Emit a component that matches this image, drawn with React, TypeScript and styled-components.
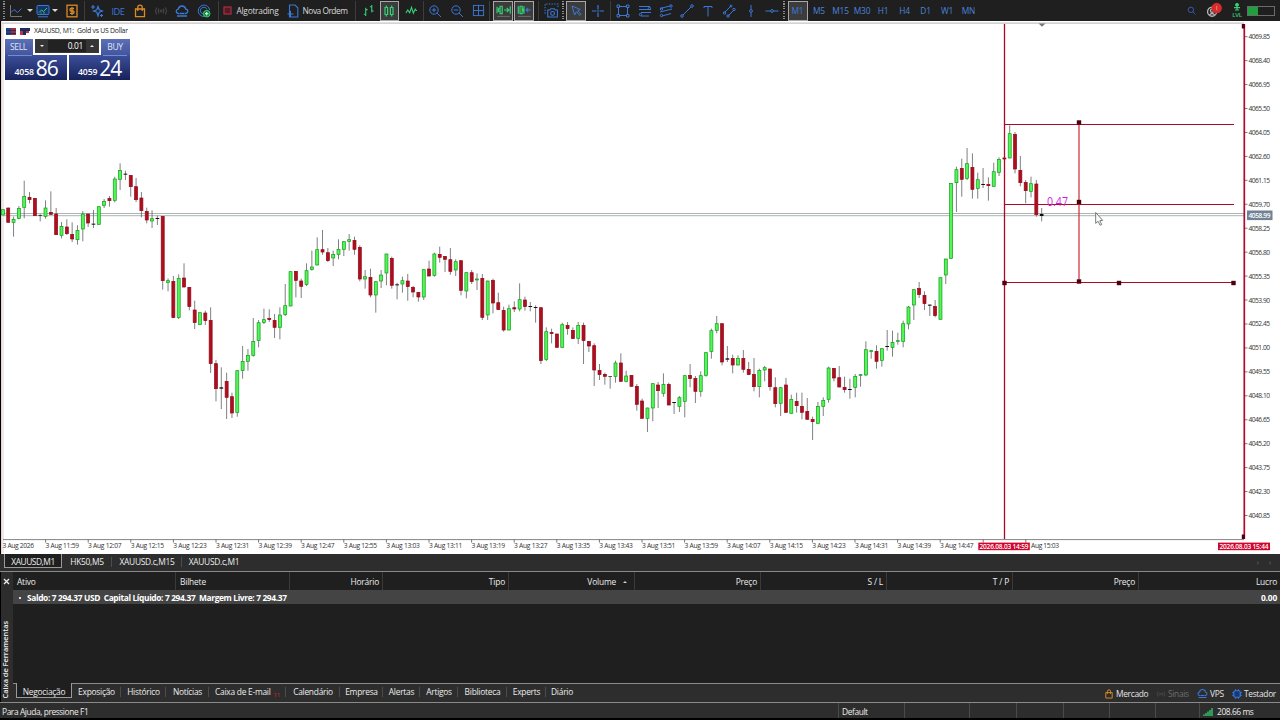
import { ReactNode } from 'react';
import styled, { createGlobalStyle, css } from 'styled-components';

const GlobalStyle = createGlobalStyle`
  * {
    box-sizing: border-box;
  }

  body {
    margin: 0;
    background: #000;
    overflow: hidden;
    font-family: 'Open Sans', 'Noto Sans', sans-serif;
  }
`;

const BLUE = '#3b78d8';
const GREEN = '#35cf74';
const ORANGE = '#dc8a28';

const Terminal = styled.div`
  display: flex;
  flex-direction: column;
  width: 1280px;
  height: 720px;
  padding-bottom: 2px;
  background: #000;
  color: #ececec;
  font-size: 8.4px;
  line-height: 1;
  white-space: nowrap;

  svg {
    flex: none;
  }
`;

/* ---------- toolbar ---------- */

const Toolbar = styled.div`
  display: flex;
  align-items: center;
  flex: 0 0 21px;
  background: #1f1f1f;
`;

const Slot = styled.div<{ $w: number; $color?: string }>`
  display: flex;
  align-items: center;
  justify-content: center;
  flex: 0 0 ${(p) => p.$w}px;
  min-width: 0;
  height: 21px;
  color: ${(p) => p.$color ?? '#d8d8d8'};
`;

const Pressed = styled.div<{ $w?: number }>`
  display: flex;
  align-items: center;
  justify-content: center;
  flex: none;
  width: ${(p) => p.$w ?? 20}px;
  height: 20px;
  background: #3c3c3c;
  border: 1px solid #a8a8a8;
`;

const Divider = styled.div`
  width: 1px;
  height: 20px;
  background: #3d3d3d;
`;

const Grip = styled.div`
  width: 2px;
  height: 20px;
  background: repeating-linear-gradient(#8a8a8a 0 1px, #1f1f1f 1px 2.5px);
`;

const Caret = styled.div`
  border: 3px solid transparent;
  border-top-color: #d8d8d8;
  border-bottom: 0;
`;

const ToolLabel = styled.span<{ $size?: number; $spacing?: number }>`
  padding-top: 2px;
  font-size: ${(p) => p.$size ?? 8.4}px;
  letter-spacing: ${(p) => p.$spacing ?? -0.1}px;
`;

const LevelMeter = styled.div`
  display: flex;
  flex-direction: column;
  align-items: center;
  color: ${GREEN};
  font-size: 6px;
  font-weight: 600;
  line-height: 8px;
  letter-spacing: -0.3px;
`;

const Spacer = styled.div`
  flex: 1;
`;

const Battery = styled.div`
  width: 28px;
  height: 10px;
  border: 1px solid #6b6b6b;
  background: linear-gradient(90deg, #1ea03c 10px, #1f1f1f 10px);
`;

/* ---------- chart ---------- */

const ChartWindow = styled.div`
  position: relative;
  flex: 0 0 533px;
  margin-left: 1px;
  background: #fff;
  border-left: 1px solid #e6d8da;
`;

const ChartCanvas = styled.svg`
  display: block;
  margin-left: -2px;
  font-family: 'Open Sans', 'Noto Sans', sans-serif;
`;

const ChartOverlay = styled.div`
  position: absolute;
  left: 3px;
  top: 5px;
  width: 125px;
`;

const ChartTitle = styled.div`
  display: flex;
  align-items: center;
  gap: 4px;
  height: 10px;
  margin: 0 0 3px 1px;
  color: #222;
  font-size: 6.9px;
  letter-spacing: -0.26px;
`;

const TradeTop = styled.div`
  display: flex;
  height: 16px;
`;

const TradeButton = styled.div<{ $w: number }>`
  display: flex;
  align-items: center;
  justify-content: center;
  width: ${(p) => p.$w}px;
  padding-right: 1px;
  background: linear-gradient(#5b70b6, #44559c);
  color: #dfe6fb;
  font-size: 8.6px;
  letter-spacing: -0.4px;
`;

const Stepper = styled.div`
  display: flex;
  align-items: center;
  flex: 1;
  height: 14px;
  margin: 0 2px;
  background: #222;
  border: 1px solid #3a3a3a;
`;

const StepArrow = styled.div<{ $up?: boolean }>`
  display: flex;
  align-items: center;
  justify-content: center;
  width: 12px;
  height: 12px;
  background: #353535;

  &::after {
    content: '';
    border: 2px solid transparent;
    ${(p) =>
      p.$up
        ? css`
            border-bottom: 2.5px solid #eee;
            border-top: 0;
          `
        : css`
            border-top: 2.5px solid #eee;
            border-bottom: 0;
          `}
  }
`;

const Lots = styled.div`
  flex: 1;
  padding-right: 3px;
  text-align: right;
  font-size: 8.4px;
  letter-spacing: -0.3px;
  color: #fff;
`;

const TradePrices = styled.div`
  display: flex;
  gap: 2px;
`;

const TradePrice = styled.div<{ $line: 'left' | 'right' }>`
  position: relative;
  display: flex;
  align-items: flex-end;
  justify-content: center;
  flex: 1;
  height: 25px;
  padding: 0 0 3px 1px;
  background: linear-gradient(#3c4f9a, #17225c);
  color: #fff;
  font-weight: 600;
  font-size: 8.7px;
  letter-spacing: -0.2px;

  &::before {
    content: '';
    position: absolute;
    top: 0;
    ${(p) => p.$line}: 3px;
    width: 24px;
    height: 1px;
    background: #6f8cd6;
  }
`;

const BigDigits = styled.span`
  margin-left: 2px;
  font-size: 21px;
  font-weight: 400;
  line-height: 18px;
  letter-spacing: -0.9px;
`;

/* ---------- chart tabs ---------- */

const ChartTabs = styled.div`
  display: flex;
  align-items: flex-start;
  flex: 0 0 18px;
  padding-left: 4px;
  background: #2d2d2d;
  border-bottom: 1px solid #8a8a8a;
`;

const ChartTab = styled.div<{ $w: number; $active?: boolean; $line?: boolean }>`
  display: flex;
  align-items: center;
  justify-content: center;
  width: ${(p) => p.$w}px;
  height: 14px;
  padding-top: 3px;
  letter-spacing: -0.3px;
  ${(p) => p.$line && 'background: linear-gradient(#4c4c4c, #4c4c4c) right 3px / 1px 10px no-repeat;'}
  ${(p) =>
    p.$active &&
    css`
      background: #1f1f1f;
      border: 1px solid #9a9a9a;
      border-top: 0;
      letter-spacing: -0.45px;
    `}
`;

const TabArrows = styled.div`
  display: flex;
  gap: 10px;
  margin: 5px 9px 0 auto;
  color: #777;
  font-size: 7px;
`;

/* ---------- toolbox ---------- */

const Toolbox = styled.div`
  display: flex;
  flex: 0 0 131px;
  background: #2d2d2d;
  border-bottom: 1px solid #8a8a8a;
`;

const ToolboxSide = styled.div`
  display: flex;
  flex-direction: column;
  align-items: center;
  justify-content: space-between;
  width: 13px;
  padding: 6px 2px 4px 0;
  border-left: 1px solid #000;
`;

const SideTitle = styled.span`
  writing-mode: vertical-rl;
  transform: rotate(180deg);
  font-size: 7.4px;
  font-weight: 600;
  letter-spacing: -0.02px;
`;

const ToolboxMain = styled.div`
  display: flex;
  flex-direction: column;
  flex: 1;
`;

const HeaderRow = styled.div`
  display: flex;
  flex: 0 0 18px;
  background: #1f1f1f;
`;

const HeaderCell = styled.div<{ $w: number; $left?: boolean; $pad?: number }>`
  display: flex;
  align-items: center;
  justify-content: ${(p) => (p.$left ? 'flex-start' : 'flex-end')};
  gap: 7px;
  width: ${(p) => p.$w}px;
  padding: 2px ${(p) => p.$pad ?? 3}px 0 4px;
  border-right: 1px solid #3a3a3a;
  letter-spacing: -0.18px;

  &:last-child {
    border-right: 0;
  }
`;

const SortMark = styled.i`
  border: 2.5px solid transparent;
  border-bottom-color: #cfcfcf;
  border-top: 0;
`;

const BalanceRow = styled.div`
  display: flex;
  align-items: center;
  flex: 0 0 14px;
  padding: 2px 3px 0 4px;
  background: #444;
  color: #fff;
  font-weight: 700;
  letter-spacing: -0.36px;

  span {
    white-space: pre;
  }

  span:last-child {
    margin-left: auto;
    letter-spacing: -0.2px;
  }
`;

const Dot = styled.i`
  width: 2px;
  height: 2px;
  margin: 0 6px 0 2px;
  background: #ddd;
`;

const ToolboxBody = styled.div`
  flex: 1;
  background: #1f1f1f;
  border-bottom: 1px solid #8a8a8a;
`;

const ToolboxTabs = styled.div`
  display: flex;
  align-items: flex-start;
  flex: 0 0 18px;
  padding-left: 3px;
`;

const ToolboxTab = styled.div<{ $w: number; $active?: boolean }>`
  display: flex;
  align-items: center;
  justify-content: center;
  width: ${(p) => p.$w}px;
  height: 14px;
  padding-top: 2px;
  letter-spacing: -0.25px;
  background: linear-gradient(#4c4c4c, #4c4c4c) right 3px / 1px 10px no-repeat;
  ${(p) =>
    p.$active &&
    css`
      margin-top: -1px;
      height: 15px;
      padding-top: 4px;
      background: #1f1f1f;
      border: 1px solid #9a9a9a;
      border-top: 0;
    `}

  &:nth-child(12) {
    background: none;
  }
`;

const MailCount = styled.sup`
  margin: 5px 0 0 3px;
  color: #e01e2c;
  font-size: 6px;
`;

const Services = styled.div`
  display: flex;
  align-items: center;
  gap: 3px;
  height: 18px;
  margin-left: auto;
  padding-right: 5px;
`;

const Service = styled.div<{ $dim?: boolean; $w: number }>`
  display: flex;
  align-items: center;
  gap: 2px;
  width: ${(p) => p.$w}px;
  padding-top: 1px;
  color: ${(p) => (p.$dim ? '#6e6e6e' : '#e4e4e4')};
  letter-spacing: -0.32px;

  span {
    padding-top: 1px;
  }
`;

const StatusBar = styled.div`
  display: flex;
  flex: 1;
  padding-left: 2px;
  background: #2d2d2d;
`;

const StatusCell = styled.div<{ $w: number }>`
  display: flex;
  align-items: center;
  gap: 4px;
  width: ${(p) => p.$w}px;
  padding: 3px 0 0 3px;
  border-left: 1px solid #4a4a4a;
  letter-spacing: -0.4px;
`;

const StatusHelp = styled.div`
  display: flex;
  align-items: center;
  width: 836px;
  padding-top: 3px;
  letter-spacing: -0.41px;
`;

/* ---------- icons ---------- */

interface IconProps {
  color?: string;
  size?: number;
  width?: number;
  children: ReactNode;
}

const Icon = ({ color = BLUE, size = 14, width = 1, children }: IconProps) => (
  <svg width={size} height={size} viewBox="0 0 14 14" fill="none" stroke={color} strokeWidth={width}>
    {children}
  </svg>
);

const BagIcon = ({ size = 14 }: { size?: number }) => (
  <Icon color={ORANGE} size={size} width={1.3}>
    <path d="M2.5 5h9v7.7h-9zM4.8 7V3.2q0-2 2.2-2t2.2 2V7" />
  </Icon>
);

const CloudIcon = ({ size = 14 }: { size?: number }) => (
  <Icon size={size} width={1.3}>
    <path d="M4 9.5H3.2q-2-.3-2-2.2t2.1-2.2Q3.8 2 7 2t3.7 3.1q2.1.2 2.1 2.2t-2 2.2H10M2 12h10M4.5 9.5h5" />
  </Icon>
);

const RadioIcon = ({ size = 14 }: { size?: number }) => (
  <Icon color="#4c4c4c" size={size}>
    <circle cx="7" cy="7" r="1" />
    <path d="M4.8 4.5q-1.5 2.5 0 5M9.2 4.5q1.5 2.5 0 5M2.5 3.5q-2 3.5 0 7M11.5 3.5q2 3.5 0 7" />
  </Icon>
);

/* ---------- chart data ---------- */

type Bar = [kind: 'g' | 'r' | 'd', high: number, top: number, bottom: number, low: number];

// levels are kept in thirds of a pixel, relative to each run's base
const runs: { base: number; bars: Bar[] }[] = [
  {
    base: 450,
    bars: [
      ['g', 178, 178, 196, 196], ['r', 173, 173, 218, 218], ['g', 200, 207, 218, 260], ['g', 168, 174, 206, 208],
      ['g', 92, 138, 173, 205], ['r', 126, 141, 150, 160], ['r', 144, 144, 198, 198], ['d', 192, 195, 197, 214],
      ['g', 151, 173, 200, 206], ['r', 124, 186, 194, 194], ['r', 174, 191, 255, 255], ['g', 216, 228, 257, 265],
      ['r', 208, 230, 252, 255], ['r', 217, 252, 268, 276], ['g', 226, 240, 270, 284], ['g', 183, 191, 238, 274],
      ['r', 191, 191, 220, 231], ['d', 180, 221, 224, 234], ['g', 169, 169, 224, 224], ['g', 147, 153, 167, 174],
      ['r', 138, 144, 153, 170], ['g', 80, 86, 152, 157], ['g', 40, 60, 89, 120], ['d', 62, 71, 74, 90],
      ['r', 75, 75, 111, 140], ['r', 84, 109, 150, 156], ['r', 126, 143, 183, 202], ['r', 173, 183, 211, 220],
      ['g', 181, 205, 214, 234], ['d', 197, 204, 207, 225], ['r', 198, 198, 393, 419], ['g', 385, 391, 398, 424],
      ['r', 378, 393, 504, 504], ['g', 373, 384, 504, 507], ['r', 340, 383, 412, 412], ['r', 411, 411, 471, 481],
      ['r', 452, 479, 519, 537], ['g', 487, 487, 525, 525], ['r', 482, 488, 513, 525], ['r', 472, 510, 642, 669],
      ['r', 630, 640, 717, 754], ['d', 652, 712, 716, 777], ['r', 668, 693, 743, 807], ['r', 728, 739, 790, 804],
      ['g', 661, 661, 788, 800], ['g', 588, 633, 663, 686], ['g', 597, 615, 635, 662], ['g', 504, 573, 617, 620],
      ['g', 510, 517, 573, 592],
    ],
  },
  {
    base: 660,
    bars: [
      ['g', 266, 298, 308, 312], ['r', 268, 294, 300, 306], ['r', 282, 300, 323, 354], ['g', 262, 284, 323, 358],
      ['g', 192, 256, 285, 288], ['g', 154, 154, 259, 259], ['r', 153, 153, 182, 232], ['r', 176, 182, 200, 234],
      ['g', 130, 151, 194, 198], ['g', 92, 140, 149, 152], ['g', 52, 88, 136, 136], ['r', 30, 88, 97, 104],
      ['r', 84, 97, 123, 126], ['g', 92, 102, 115, 138], ['g', 58, 87, 104, 118], ['g', 64, 64, 89, 108],
      ['g', 42, 58, 65, 92], ['r', 50, 60, 89, 104], ['r', 76, 81, 178, 184], ['g', 150, 169, 178, 206],
      ['r', 146, 171, 226, 232], ['g', 184, 184, 226, 278], ['g', 150, 164, 184, 204], ['g', 101, 101, 160, 196],
      ['r', 110, 114, 197, 206], ['d', 188, 193, 196, 238], ['g', 170, 181, 193, 218], ['r', 162, 182, 201, 242],
      ['r', 198, 201, 217, 232], ['r', 216, 216, 232, 245], ['g', 148, 148, 232, 240], ['r', 122, 146, 169, 169],
      ['g', 98, 101, 167, 170], ['r', 80, 102, 113, 128], ['r', 108, 108, 119, 156], ['r', 84, 118, 155, 164],
      ['g', 118, 124, 151, 168], ['r', 121, 121, 212, 226], ['g', 157, 157, 214, 235], ['r', 150, 157, 186, 192],
      ['g', 160, 176, 181, 210], ['r', 162, 174, 293, 300], ['g', 182, 182, 286, 300],
    ],
  },
  {
    base: 690,
    bars: [
      ['r', 146, 150, 220, 250], ['r', 188, 217, 240, 240], ['r', 230, 240, 301, 305], ['g', 224, 235, 301, 301],
      ['r', 214, 232, 238, 246], ['g', 160, 208, 238, 244], ['r', 200, 209, 231, 242], ['d', 216, 228, 231, 244],
      ['d', 226, 231, 234, 278], ['r', 232, 232, 393, 402], ['g', 292, 304, 389, 393], ['r', 296, 306, 312, 340],
      ['r', 311, 311, 353, 353], ['g', 278, 283, 353, 353], ['r', 276, 285, 297, 314], ['r', 292, 300, 327, 327],
      ['g', 276, 285, 326, 342], ['r', 278, 285, 333, 402], ['r', 333, 333, 349, 366], ['r', 340, 346, 421, 468],
      ['r', 402, 420, 435, 450], ['r', 428, 432, 440, 464], ['d', 439, 439, 441, 476], ['g', 392, 398, 440, 458],
      ['r', 370, 398, 455, 455], ['g', 422, 437, 455, 457], ['r', 435, 435, 470, 470], ['r', 462, 468, 524, 542],
      ['r', 506, 512, 566, 566], ['g', 533, 533, 566, 606], ['g', 460, 460, 535, 574], ['r', 456, 464, 483, 534],
      ['g', 430, 462, 491, 500], ['r', 458, 462, 526, 526], ['d', 516, 516, 519, 552], ['g', 498, 502, 530, 546],
      ['g', 436, 436, 515, 562],
    ],
  },
  {
    base: 900,
    bars: [
      ['r', 192, 225, 237, 262], ['r', 228, 234, 275, 309], ['g', 214, 226, 275, 290], ['g', 157, 157, 227, 230],
      ['g', 86, 91, 156, 176], ['g', 48, 70, 92, 100], ['r', 70, 70, 187, 196], ['d', 138, 175, 179, 186],
      ['r', 164, 174, 196, 220], ['g', 166, 174, 196, 196], ['r', 150, 174, 209, 218], ['r', 186, 207, 225, 225],
      ['r', 174, 222, 261, 274], ['g', 206, 210, 261, 292], ['g', 198, 202, 211, 244], ['r', 206, 206, 261, 272],
      ['r', 232, 262, 312, 322], ['g', 262, 262, 311, 348], ['r', 234, 254, 338, 338], ['g', 284, 297, 341, 341],
      ['r', 278, 303, 318, 338], ['r', 278, 318, 338, 358], ['r', 294, 333, 359, 359], ['r', 350, 357, 366, 420],
      ['g', 306, 318, 371, 371], ['g', 292, 300, 320, 348], ['g', 200, 203, 299, 308], ['r', 204, 204, 235, 244],
      ['r', 198, 232, 262, 262], ['r', 230, 261, 270, 278], ['d', 236, 267, 270, 296], ['g', 222, 228, 263, 292],
      ['g', 222, 223, 228, 260], ['g', 124, 148, 226, 228], ['g', 150, 151, 156, 176], ['r', 136, 153, 185, 206],
      ['g', 145, 145, 182, 200], ['d', 90, 138, 141, 152], ['g', 92, 126, 143, 170], ['g', 98, 121, 125, 134],
    ],
  },
  {
    base: 330,
    bars: [
      ['g', 632, 640, 695, 712], ['g', 588, 590, 643, 658], ['g', 538, 538, 586, 630], ['r', 516, 534, 555, 564],
      ['r', 544, 555, 582, 600], ['d', 583, 584, 587, 618], ['r', 570, 588, 618, 622], ['g', 502, 502, 629, 629],
      ['g', 446, 446, 496, 522], ['g', 219, 219, 446, 446], ['g', 170, 178, 219, 306], ['r', 146, 174, 209, 260],
      ['g', 114, 160, 206, 210], ['r', 130, 171, 239, 266], ['g', 188, 208, 236, 266], ['d', 174, 222, 225, 234],
      ['r', 202, 222, 228, 272], ['g', 158, 184, 230, 230], ['g', 142, 147, 188, 198], ['r', 142, 143, 148, 150],
      ['g', 46, 70, 145, 145], ['r', 66, 72, 178, 190], ['r', 138, 180, 219, 229], ['r', 210, 216, 243, 280],
      ['g', 200, 220, 245, 262], ['r', 210, 221, 315, 320], ['d', 294, 312, 318, 334],
    ],
  },
];

const bars = runs.flatMap(({ base, bars: run }) =>
  run.map(([kind, ...levels]) => ({ kind, levels: levels.map((v) => (v + base) / 3) })),
);

const barFill = { g: '#56f456', r: '#ac0f1e', d: '#111' };
const barStroke = { g: '#0a9e1c', r: '#96081a', d: '#111' };

const priceLabels = Array.from({ length: 21 }, (_, i) => (4069.85 - 1.45 * i).toFixed(2));

const timeLabels = Array.from({ length: 22 }, (_, i) => {
  const minutes = 11 * 60 + 59 + i * 8;
  return `${Math.floor(minutes / 60)}:${String(minutes % 60).padStart(2, '0')}`;
});

const handles = [
  [1079, 122.5],
  [1079, 202],
  [1079, 281.5],
  [1004.5, 283],
  [1119, 283],
  [1233.5, 283],
];

const Candles = () => (
  <g>
    {bars.map(({ kind, levels: [high, top, bottom, low] }, i) => {
      const x = 2.9 + i * 5.327;
      const inset = kind === 'd' ? 0 : 0.35;
      return (
        <g key={i}>
          <path d={`M${x} ${high}V${low}`} stroke="#555" strokeWidth="0.75" />
          <rect
            x={x - 1.85 + inset}
            y={top + inset}
            width={3.7 - inset * 2}
            height={Math.max(bottom - top - inset * 2, 0.6)}
            fill={barFill[kind]}
            stroke={kind === 'd' ? 'none' : barStroke[kind]}
            strokeWidth="0.7"
          />
        </g>
      );
    })}
  </g>
);

const Chart = () => (
  <ChartCanvas width="1280" height="533" viewBox="0 21 1280 533">
    <path d="M2 23.1H1244" stroke="#c4c4c4" strokeWidth="1.2" />
    <path d="M3 24V553" stroke="#d9c6c9" strokeWidth="0.8" />
    <path d="M1038.5 23.5h7l-3.5 3.2z" fill="#777" />
    <path d="M3 213.5H1244M3 215.7H1244" stroke="#a3abab" strokeWidth="0.9" />
    <Candles />

    <g stroke="#ab0a26" strokeWidth="1.2">
      <path d="M1004.5 24V539" strokeWidth="1.3" />
      <path d="M1005 124.5H1234M1005 204.5H1234M1005 282.5H1234" />
      <path d="M1079 123V282" stroke="#cc2a34" />
      <path d="M1244.3 24V539" strokeWidth="1.7" stroke="#b20a2c" />
    </g>
    <path d="M1241.8 24h3v4.5h-3zM1241.8 534.5h3v4.5h-3z" fill="#4c0010" />
    {handles.map(([x, y]) => (
      <rect key={`${x}-${y}`} x={x - 2.2} y={y - 2.2} width="4.4" height="4.4" fill="#4c0010" />
    ))}
    <text x="1047" y="206" fontSize="12" fill="#d01ee0" textLength="21" lengthAdjust="spacingAndGlyphs">
      0.47
    </text>
    <path d="M1095.7 212.5v10.8l2.4-2 2 4 1.6-.8-1.9-3.8 2.9-.3z" fill="#fff" stroke="#555" strokeWidth="0.8" />

    <path d="M3 539.6H1244" stroke="#777" strokeWidth="0.9" />
    <g fontSize="6.7" fill="#333">
      {priceLabels.map((label, i) => (
        <g key={label}>
          <path d={`M1245 ${36.7 + i * 23.94}h2.5`} stroke="#555" strokeWidth="0.8" />
          <text x="1248.5" y={39.2 + i * 23.94} textLength="21.5">
            {label}
          </text>
        </g>
      ))}
      <text x="2.5" y="548.3" textLength="31.5">
        3 Aug 2026
      </text>
      {timeLabels.map((label, i) => (
        <g key={label}>
          <path d={`M${45.6 + i * 42.6} 539.6v3`} stroke="#555" strokeWidth="0.8" />
          <text x={45.5 + i * 42.6} y="548.3" textLength="33.5">
            3 Aug {label}
          </text>
        </g>
      ))}
      <path d="M983.2 539.6v3M1025.8 539.6v3" stroke="#555" strokeWidth="0.8" />
      <text x="1031" y="548.3" textLength="28">
        Aug 15:03
      </text>
    </g>
    <g fontSize="6.6" fontWeight="600" fill="#fff">
      <rect x="1247" y="210.5" width="25.5" height="9.6" fill="#708294" />
      <text x="1248.5" y="217.8" textLength="22">
        4058.99
      </text>
      <rect x="978.3" y="542.6" width="51.5" height="7.6" fill="#d0042c" />
      <text x="979.5" y="548.7" textLength="49">
        2026.08.03 14:59
      </text>
      <rect x="1218" y="542.6" width="52" height="7.6" fill="#d0042c" />
      <text x="1219.5" y="548.7" textLength="49">
        2026.08.03 15:44
      </text>
    </g>
  </ChartCanvas>
);

const TradePanel = () => (
  <ChartOverlay>
    <ChartTitle>
      <svg width="10" height="7" viewBox="0 0 10 7">
        <path d="M0 0h10v7H0z" fill="#a82a3c" />
        <path d="M0 0h5v7H0z" fill="#20458c" />
        <path d="M0 2.5h10M0 5.5h10" stroke="#24305c" />
      </svg>
      <svg width="10" height="7" viewBox="0 0 10 7">
        <path d="M0 0h10v3H6v4H3V3H0z" fill="#1c2c5c" />
        <path d="M0 3h3v4H0zM6 3h3v2H6z" fill="#c03040" />
      </svg>
      XAUUSD, M1: &nbsp;Gold vs US Dollar
    </ChartTitle>
    <TradeTop>
      <TradeButton $w={28}>SELL</TradeButton>
      <Stepper>
        <StepArrow />
        <Lots>0.01</Lots>
        <StepArrow $up />
      </Stepper>
      <TradeButton $w={29}>BUY</TradeButton>
    </TradeTop>
    <TradePrices>
      <TradePrice $line="left">
        4058<BigDigits>86</BigDigits>
      </TradePrice>
      <TradePrice $line="right">
        4059<BigDigits>24</BigDigits>
      </TradePrice>
    </TradePrices>
  </ChartOverlay>
);

const periods: [string, number][] = [
  ['M5', 20],
  ['M15', 23],
  ['M30', 20],
  ['H1', 22],
  ['H4', 21],
  ['D1', 21],
  ['W1', 22],
  ['MN', 21],
];

const MainToolbar = () => (
  <Toolbar>
    <Slot $w={8}><Grip /></Slot>
    <Slot $w={16}>
      <Icon>
        <path d="M1.5 1v11.5H13" stroke="#777" />
        <path d="M2 8.5l3-3 3.5 3 4-4" />
      </Icon>
    </Slot>
    <Slot $w={11}><Caret /></Slot>
    <Slot $w={16}>
      <Icon>
        <rect x="1" y="1.5" width="12" height="9" rx="1" fill="#15346a" />
        <path d="M2 12.8h10" />
        <path d="M3 8.5L5.5 6l2 1.5L11 4M5 9.5v-1M8 9.5V8" stroke={GREEN} />
      </Icon>
    </Slot>
    <Slot $w={8}><Caret /></Slot>
    <Slot $w={25}>
      <Icon color={ORANGE} width={1.3}>
        <rect x="2" y="1.2" width="10" height="11.6" />
        <path d="M9 4.5H6q-1 0-1 1.2T6 7h2q1 0 1 1.2t-1 1.2H5M7 3v8" />
      </Icon>
    </Slot>
    <Divider />
    <Slot $w={24}>
      <Icon width={1.2}>
        <path d="M8 2.5l1.2 3.2L12.5 7 9.2 8.3 8 12 6.8 8.3 3.5 7l3.3-1.3z" />
        <path d="M3 1v4M1 3h4M11.5 10v3M10 11.5h3" />
      </Icon>
    </Slot>
    <Slot $w={18} $color={BLUE}><ToolLabel $size={9.3} $spacing={-0.5}>IDE</ToolLabel></Slot>
    <Slot $w={25}><BagIcon /></Slot>
    <Slot $w={18}><RadioIcon /></Slot>
    <Slot $w={24}><CloudIcon /></Slot>
    <Slot $w={19}>
      <Icon>
        <path d="M7 12.5A5.7 5.7 0 1 1 12.6 6M6.5 10A3.4 3.4 0 1 1 10 5.5" />
        <circle cx="9.7" cy="9.7" r="3.3" fill="#17803f" stroke={GREEN} />
        <path d="M9.7 8v3.4M8 9.7h3.4" stroke="#d6ffe2" />
      </Icon>
    </Slot>
    <Slot $w={10}><Divider /></Slot>
    <Slot $w={8}>
      <Icon size={9} color="#b83246" width={1.6}>
        <rect x="1.5" y="1.5" width="11" height="11" fill="#541b25" />
      </Icon>
    </Slot>
    <Slot $w={53}><ToolLabel $spacing={-0.27}>Algotrading</ToolLabel></Slot>
    <Slot $w={18}>
      <Icon width={1.1}>
        <path d="M3.5 1h5.5l2.8 2.8V13H3.5zM1.5 10h6M4.5 7v6" />
      </Icon>
    </Slot>
    <Slot $w={46}><ToolLabel $spacing={-0.5}>Nova Ordem</ToolLabel></Slot>
    <Slot $w={14}><Divider /></Slot>
    <Slot $w={12}>
      <Icon color={GREEN} width={1.2} size={13}>
        <path d="M4 4v9M2 11h2M4 6h2M10.5 1v8M8.5 3h2M10.5 7.5h2" />
      </Icon>
    </Slot>
    <Slot $w={30}>
      <Pressed $w={19}>
        <Icon color={GREEN} width={1.2}>
          <path d="M3 3.5h2.6v7H3zM8.4 3.5H11v7H8.4zM4.3 1.5v2M4.3 10.5v2M9.7 1.5v2M9.7 10.5v2" />
        </Icon>
      </Pressed>
    </Slot>
    <Slot $w={14}>
      <Icon color={GREEN} width={1.2} size={13}>
        <path d="M1 9.5l2-3 2 3 2-6 2 6.5 2-4.5 1 1.5h1" />
      </Icon>
    </Slot>
    <Slot $w={10}><Divider /></Slot>
    <Slot $w={14}>
      <Icon>
        <circle cx="6" cy="6" r="4.2" />
        <path d="M9 9l4 4M6 3.8v4.4M3.8 6h4.4" />
      </Icon>
    </Slot>
    <Slot $w={30}>
      <Icon>
        <circle cx="6" cy="6" r="4.2" />
        <path d="M9 9l4 4M3.8 6h4.4" />
      </Icon>
    </Slot>
    <Slot $w={13}>
      <Icon size={13}>
        <rect x="1.5" y="1.5" width="11" height="11" />
        <path d="M7 1.5v11M1.5 7h11" />
      </Icon>
    </Slot>
    <Slot $w={8}><Divider /></Slot>
    <Slot $w={20}>
      <Pressed>
        <Icon color={GREEN} width={1.1} size={15}>
          <path d="M1 3.5v6M2.8 4.5q-1 2 0 4M3.8 3h2v7h-2zM7.5 6.5h4.5M10 4.5l2 2-2 2M13.3 3v7" />
          <path d="M1 12.5h12" stroke="#888" strokeWidth="0.6" />
        </Icon>
      </Pressed>
    </Slot>
    <Slot $w={22}>
      <Pressed>
        <Icon color={GREEN} width={1.1} size={15}>
          <path d="M1.2 3v7M2.8 3h2v7h-2zM6.5 3v7M4.8 4.5l1.7 4" />
          <path d="M13 6.5H8.5M10.5 4.5l-2 2 2 2" stroke={BLUE} />
          <path d="M1 12.5h12" stroke="#888" strokeWidth="0.6" />
        </Icon>
      </Pressed>
    </Slot>
    <Slot $w={6}><Divider /></Slot>
    <Slot $w={20}>
      <Icon size={15}>
        <path d="M1 10V1h12v3" strokeDasharray="1.3 1.2" />
        <path d="M3.5 6.5h2l1-1.2h3l1 1.2h2V13h-9z" />
        <circle cx="8" cy="9.7" r="1.8" />
      </Icon>
    </Slot>
    <Slot $w={3}><Grip /></Slot>
    <Slot $w={24}>
      <Pressed>
        <Icon>
          <path d="M3 2l2.6 9 1.9-3.2 3.3 3.6 1.2-1.2-3.3-3.4 2.6-1.3z" />
        </Icon>
      </Pressed>
    </Slot>
    <Slot $w={20}>
      <Icon width={1.2}>
        <path d="M7 1v4.5M7 8.5V13M1 7h4.5M8.5 7H13M6 7h2" />
      </Icon>
    </Slot>
    <Slot $w={4}><Divider /></Slot>
    <Slot $w={22}>
      <Icon>
        <path d="M2.5 3.5v7M11.5 3.5v7M3.5 2.5h7M3.5 11.5h7" />
        <path d="M1 1h2.5v2.5H1zM10.5 1H13v2.5h-2.5zM1 10.5h2.5V13H1zM10.5 10.5H13V13h-2.5z" />
      </Icon>
    </Slot>
    <Slot $w={21}>
      <Icon>
        <path d="M1 2.5h11M1 5.5h12M3 8.5h10M3 12h8" />
        <circle cx="11.5" cy="4.5" r="1.2" />
        <circle cx="2.5" cy="10.5" r="1.2" />
      </Icon>
    </Slot>
    <Slot $w={21}>
      <Icon>
        <path d="M1 4.5l10-2.5M1 8l12-3M3 12l9-2.5" />
        <circle cx="12" cy="2" r="1.2" />
        <circle cx="2.5" cy="5" r="1.2" />
        <circle cx="2.5" cy="11.5" r="1.2" />
      </Icon>
    </Slot>
    <Slot $w={21}>
      <Icon>
        <path d="M3 11l8-8" />
        <circle cx="12" cy="2" r="1.3" />
        <circle cx="2" cy="12" r="1.3" />
      </Icon>
    </Slot>
    <Slot $w={22}>
      <Icon>
        <path d="M3 4V2.5h8V4M7 2.5v10" />
      </Icon>
    </Slot>
    <Slot $w={20}>
      <Icon>
        <path d="M2.5 8.5L9 2M6.5 11.5l5-5" />
        <circle cx="2.5" cy="9" r="1.2" />
        <circle cx="6" cy="12" r="1.2" />
        <circle cx="12" cy="5.5" r="1.2" />
        <circle cx="9" cy="2" r="1" />
      </Icon>
    </Slot>
    <Slot $w={23}>
      <Icon>
        <path d="M7 1v4.5M7 8.5V13" />
        <circle cx="7" cy="7" r="1.4" />
      </Icon>
    </Slot>
    <Slot $w={20}>
      <Icon>
        <path d="M.5 7h5M8.5 7h5" />
        <circle cx="7" cy="7" r="1.4" />
      </Icon>
    </Slot>
    <Slot $w={4}><Grip /></Slot>
    <Slot $w={23} $color={BLUE}>
      <Pressed><ToolLabel>M1</ToolLabel></Pressed>
    </Slot>
    {periods.map(([label, w]) => (
      <Slot key={label} $w={w} $color="#4a84dc"><ToolLabel $spacing={-0.25}>{label}</ToolLabel></Slot>
    ))}
    <Spacer />
    <Slot $w={21}>
      <Icon size={9} color="#3b5fc0" width={1.4}>
        <circle cx="6" cy="6" r="4.2" />
        <path d="M9 9l4 4" />
      </Icon>
    </Slot>
    <Slot $w={25}>
      <Icon size={17} color="#b8b8b8" width={1.1}>
        <circle cx="5" cy="8" r="3.7" />
        <path d="M2.9 10.6q2.1-2.3 4.2 0" />
        <circle cx="5" cy="7.2" r="1.3" />
        <circle cx="8.8" cy="5" r="4.3" fill="#d92b2b" stroke="none" />
        <path d="M8.8 3.2v3.6" stroke="#f08080" strokeWidth="0.8" />
      </Icon>
    </Slot>
    <Slot $w={20}>
      <LevelMeter>
        <svg width="10" height="8" viewBox="0 0 10 8" fill="none" stroke={GREEN}>
          <circle cx="5" cy="1.8" r="1.5" fill={GREEN} />
          <path d="M2 4.7h6M5 3.5v4M3 7h4" strokeWidth="1.2" />
        </svg>
        LVL
      </LevelMeter>
    </Slot>
    <Battery />
    <Slot $w={5} />
  </Toolbar>
);

const chartTabs: { label: string; w: number; active?: boolean; line?: boolean }[] = [
  { label: 'XAUUSD,M1', w: 58, active: true },
  { label: 'HK50,M5', w: 50, line: true },
  { label: 'XAUUSD.c,M15', w: 70, line: true },
  { label: 'XAUUSD.c,M1', w: 64 },
];

const columns: { label: string; w: number; left?: boolean; sort?: boolean; pad?: number }[] = [
  { label: 'Ativo', w: 163, left: true },
  { label: 'Bilhete', w: 114, left: true },
  { label: 'Horário', w: 93 },
  { label: 'Tipo', w: 126 },
  { label: 'Volume', w: 126, sort: true, pad: 7 },
  { label: 'Preço', w: 126 },
  { label: 'S / L', w: 126 },
  { label: 'T / P', w: 126 },
  { label: 'Preço', w: 126 },
  { label: 'Lucro', w: 141 },
];

const toolboxTabs: [string, number][] = [
  ['Negociação', 56],
  ['Exposição', 49],
  ['Histórico', 45],
  ['Notícias', 43],
  ['Caixa de E-mail', 77],
  ['Calendário', 54],
  ['Empresa', 43],
  ['Alertas', 37],
  ['Artigos', 38],
  ['Biblioteca', 49],
  ['Experts', 39],
  ['Diário', 32],
];

const App = () => (
  <>
    <GlobalStyle />
    <Terminal>
      <MainToolbar />

      <ChartWindow>
        <Chart />
        <TradePanel />
      </ChartWindow>

      <ChartTabs>
        {chartTabs.map(({ label, w, active, line }) => (
          <ChartTab key={label} $w={w} $active={active} $line={line}>
            {label}
          </ChartTab>
        ))}
        <TabArrows>
          <span>‹</span>
          <span>›</span>
        </TabArrows>
      </ChartTabs>

      <Toolbox>
        <ToolboxSide>
          <svg width="7" height="7" viewBox="0 0 7 7" stroke="#eee" strokeWidth="1.3">
            <path d="M1 1l5 5M6 1L1 6" />
          </svg>
          <SideTitle>Caixa de Ferramentas</SideTitle>
        </ToolboxSide>
        <ToolboxMain>
          <HeaderRow>
            {columns.map(({ label, w, left, sort, pad }, i) => (
              <HeaderCell key={i} $w={w} $left={left} $pad={pad}>
                {label}
                {sort && <SortMark />}
              </HeaderCell>
            ))}
          </HeaderRow>
          <BalanceRow>
            <Dot />
            <span>{'Saldo: 7 294.37 USD  Capital Líquido: 7 294.37  Margem Livre: 7 294.37'}</span>
            <span>0.00</span>
          </BalanceRow>
          <ToolboxBody />
          <ToolboxTabs>
            {toolboxTabs.map(([label, w], i) => (
              <ToolboxTab key={label} $w={w} $active={i === 0}>
                {label}
                {label === 'Caixa de E-mail' && <MailCount>11</MailCount>}
              </ToolboxTab>
            ))}
            <Services>
              <Service $w={49}><BagIcon size={10} /><span>Mercado</span></Service>
              <Service $w={38} $dim><RadioIcon size={10} /><span>Sinais</span></Service>
              <Service $w={32}><CloudIcon size={11} /><span>VPS</span></Service>
              <Service $w={43}>
                <Icon size={10} width={1.6}>
                  <rect x="2.5" y="2.5" width="9" height="9" rx="2" fill="#153a78" />
                  <path d="M5 .5v2M9 .5v2M5 11.5v2M9 11.5v2M.5 5h2M.5 9h2M11.5 5h2M11.5 9h2" />
                </Icon>
                <span>Testador</span>
              </Service>
            </Services>
          </ToolboxTabs>
        </ToolboxMain>
      </Toolbox>

      <StatusBar>
        <StatusHelp>Para Ajuda, pressione F1</StatusHelp>
        <StatusCell $w={66}>Default</StatusCell>
        <StatusCell $w={65} />
        <StatusCell $w={47} />
        <StatusCell $w={47} />
        <StatusCell $w={46} />
        <StatusCell $w={46} />
        <StatusCell $w={44} />
        <StatusCell $w={81}>
          <svg width="10" height="8" viewBox="0 0 10 8" stroke={GREEN} strokeWidth="1.3">
            <path d="M1 8V6.5M3 8V5M5 8V3.5M7 8V2M9 8V0" />
          </svg>
          208.66 ms
        </StatusCell>
      </StatusBar>
    </Terminal>
  </>
);

export default App;
